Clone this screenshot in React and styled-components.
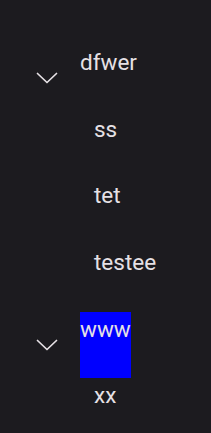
import React from "react";
import styled, { createGlobalStyle } from "styled-components";

const GlobalStyle = createGlobalStyle`
  html, body {
    margin: 0;
    padding: 0;
    background: #1c1b1f;
  }
  body {
    font-family: Roboto, "Liberation Sans", sans-serif;
  }
`;

const tree = [
  { label: "dfwer", children: ["ss", "tet", "testee"] },
  { label: "www", selected: true, children: ["xx"] },
];

export default function App() {
  return (
    <Container>
      <GlobalStyle />
      {tree.map((group) => (
        <Group key={group.label}>
          <Row>
            <Chevron viewBox="0 0 22 12">
              <path d="M1.5 1.5 L11 10.5 L20.5 1.5" />
            </Chevron>
            <Label selected={group.selected}>{group.label}</Label>
          </Row>
          {group.children.map((child) => (
            <ChildRow key={child}>
              <Label>{child}</Label>
            </ChildRow>
          ))}
        </Group>
      ))}
    </Container>
  );
}

const Container = styled.div`
  width: 211px;
  height: 433px;
  overflow: hidden;
  padding-top: 45px;
  box-sizing: border-box;
  background: #1c1b1f;
`;

const Group = styled.div`
  display: flex;
  flex-direction: column;
`;

const Row = styled.div`
  display: flex;
  align-items: center;
  height: 66.67px;
  padding-left: 36px;
`;

const ChildRow = styled(Row)`
  padding-left: 94px;
`;

const Chevron = styled.svg`
  width: 22px;
  height: 12px;
  margin-right: 22px;
  fill: none;
  stroke: #e6e1e5;
  stroke-width: 1.7;
  stroke-linecap: round;
  stroke-linejoin: round;
`;

const Label = styled.div`
  align-self: stretch;
  box-sizing: border-box;
  padding-top: 4px;
  font-size: 22.5px;
  line-height: normal;
  color: #e6e1e5;
  background: ${(p) => (p.selected ? "#0000ff" : "transparent")};
`;
